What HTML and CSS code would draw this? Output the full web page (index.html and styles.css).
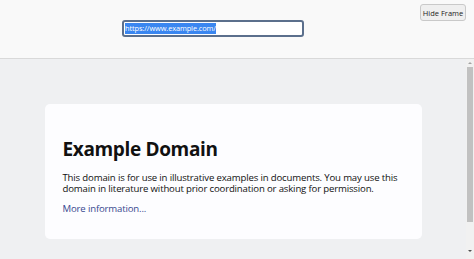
FILE: index.html
```html
<!DOCTYPE html>
<html>
<head>
<meta charset="utf-8">
<link rel="stylesheet" href="styles.css">
</head>
<body>
<div class="top">
  <div class="url-box"><span class="sel">https://www.example.com/</span></div>
  <button class="hide-btn">Hide Frame</button>
</div>
<div class="frame">
  <div class="viewport">
    <div class="card">
      <h1>Example Domain</h1>
      <p>This domain is for use in illustrative examples in documents. You may use this domain in literature without prior coordination or asking for permission.</p>
      <p><a href="#">More information...</a></p>
    </div>
  </div>
  <div class="scrollbar">
    <div class="arrow up"></div>
    <div class="thumb"></div>
    <div class="arrow down"></div>
  </div>
</div>
</body>
</html>
```
FILE: styles.css
```css
html, body {
  margin: 0;
  padding: 0;
  width: 474px;
  height: 259px;
  overflow: hidden;
  font-family: "Open Sans", "Noto Sans", sans-serif;
}
.top {
  height: 59px;
  box-sizing: border-box;
  background: #f9f9f9;
  border-bottom: 1px solid #d9d9d9;
  display: flex;
  align-items: flex-start;
  padding: 4px 8px 0 122px;
}
.url-box {
  margin-top: 16px;
  width: 182px;
  height: 17px;
  box-sizing: border-box;
  border: 2px solid #5b6f8c;
  border-radius: 3px;
  background: #fff;
  padding: 1px 1px;
  display: flex;
  align-items: center;
}
.sel {
  background: #3a86f0;
  color: #fff;
  font-size: 7.4px;
  line-height: 11px;
  letter-spacing: -0.1px;
}
.hide-btn {
  margin-left: auto;
  width: 46px;
  height: 17px;
  padding: 0;
  box-sizing: border-box;
  background: #efefef;
  border: 1px solid #c9c9c9;
  border-radius: 3px;
  font-family: "Open Sans", "Noto Sans", sans-serif;
  font-size: 7.5px;
  color: #222;
}
.frame {
  height: 200px;
  display: flex;
}
.viewport {
  flex: 1;
  background: #eff0f2;
  padding-top: 45px;
}
.card {
  width: 377px;
  height: 135px;
  box-sizing: border-box;
  margin: 0 auto;
  background: #fdfdff;
  border-radius: 5px;
  padding: 33px 18px 0 18px;
}
h1 {
  margin: 0 0 11px 0;
  font-size: 19px;
  line-height: 24px;
  font-weight: 700;
  color: #111;
  letter-spacing: -0.35px;
}
p {
  margin: 0 0 9px 0;
  font-size: 9.6px;
  line-height: 11px;
  color: #111;
  letter-spacing: -0.16px;
}
a {
  color: #38488f;
  text-decoration: none;
}
.scrollbar {
  width: 8px;
  background: #f1f1f1;
  display: flex;
  flex-direction: column;
  align-items: center;
}
.arrow {
  width: 0;
  height: 0;
  border-left: 2px solid transparent;
  border-right: 2px solid transparent;
}
.arrow.up {
  margin-top: 3px;
  border-bottom: 2px solid #a3a3a3;
}
.arrow.down {
  margin-top: 28px;
  border-top: 2px solid #505050;
}
.thumb {
  margin-top: 3px;
  width: 6px;
  height: 155px;
  background: #c1c1c1;
}
```
